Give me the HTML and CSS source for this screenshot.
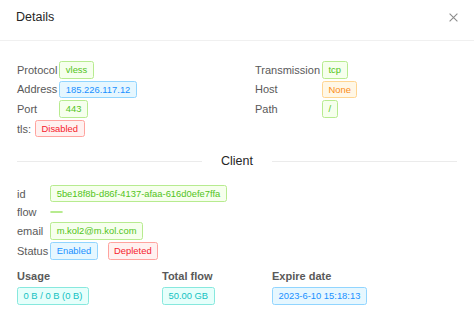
FILE: index.html
```html
<!DOCTYPE html>
<html>
<head>
<meta charset="utf-8">
<link rel="stylesheet" href="styles.css">
</head>
<body>
<div class="modal">
  <div class="header">
    <div class="title">Details</div>
    <button class="close" aria-label="Close">
      <svg width="9" height="9" viewBox="0 0 9 9"><path d="M0.6 0.6 L8.4 8.4 M8.4 0.6 L0.6 8.4" stroke="#8c8c8c" stroke-width="1.1" fill="none"/></svg>
    </button>
  </div>
  <div class="body">
    <div class="info">
      <div class="kv">
        <span class="label">Protocol</span><span class="tag green">vless</span>
        <span class="label">Address</span><span class="tag blue">185.226.117.12</span>
        <span class="label">Port</span><span class="tag green">443</span>
      </div>
      <div class="kv">
        <span class="label">Transmission</span><span class="tag green">tcp</span>
        <span class="label">Host</span><span class="tag orange">None</span>
        <span class="label">Path</span><span class="tag green">/</span>
      </div>
    </div>
    <div class="tls"><span class="label">tls:</span> <span class="tag red">Disabled</span></div>
    <div class="divider"><span class="divider-text">Client</span></div>
    <div class="kv client">
      <span class="label">id</span><span class="tag green">5be18f8b-d86f-4137-afaa-616d0efe7ffa</span>
      <span class="label">flow</span><span class="tag green empty"></span>
      <span class="label">email</span><span class="tag green">m.kol2@m.kol.com</span>
      <span class="label">Status</span><span class="tags"><span class="tag blue">Enabled</span><span class="tag red">Depleted</span></span>
    </div>
    <div class="stats">
      <div class="stat"><span class="stat-label">Usage</span><span class="tag cyan">0 B / 0 B (0 B)</span></div>
      <div class="stat"><span class="stat-label">Total flow</span><span class="tag cyan">50.00 GB</span></div>
      <div class="stat"><span class="stat-label">Expire date</span><span class="tag blue">2023-6-10 15:18:13</span></div>
    </div>
  </div>
</div>
</body>
</html>
```
FILE: styles.css
```css
* { box-sizing: border-box; }
html, body { margin: 0; padding: 0; background: #fff; }
body { font-family: "Liberation Sans", Arial, sans-serif; color: #595959; }
.modal { width: 474px; height: 310px; background: #fff; overflow: hidden; }
.header {
  height: 41px;
  padding: 9px 16px 0 16px;
  border-bottom: 1px solid #f0f0f0;
  display: flex;
  justify-content: space-between;
  align-items: flex-start;
}
.title { font-size: 12.5px; line-height: 17.2px; color: #262626; }
.close {
  border: 0; background: none; padding: 0; margin: 4px 0 0 0;
  width: 9px; height: 9px; display: flex; cursor: pointer;
}
.body { padding: 20px 17px 0 17px; }
.info { display: grid; grid-template-columns: 238px 1fr; }
.kv {
  display: grid;
  grid-template-columns: auto 1fr;
  column-gap: 2px;
  row-gap: 2px;
  align-items: center;
  justify-items: start;
}
.label { font-size: 11px; line-height: 16px; color: #595959; }
.tag {
  display: inline-block;
  font-size: 9.4px;
  line-height: 15.6px;
  padding: 0 5.5px;
  border: 1px solid;
  border-radius: 2.5px;
  white-space: nowrap;
}
.tag.empty { height: 2px; width: 12.5px; padding: 0; line-height: 0; }
.green { color: #52c41a; background: #f6ffed; border-color: #b7eb8f; }
.blue { color: #1890ff; background: #e6f7ff; border-color: #91d5ff; }
.red { color: #f5222d; background: #fff1f0; border-color: #ffa39e; }
.orange { color: #fa8c16; background: #fff7e6; border-color: #ffd591; }
.cyan { color: #13c2c2; background: #e6fffb; border-color: #87e8de; }
.tls { margin-top: 2px; display: flex; align-items: center; gap: 4px; }
.divider {
  display: flex;
  align-items: center;
  margin: 16px 0 14.5px 0;
}
.divider::before, .divider::after {
  content: "";
  flex: 1;
  border-top: 1px solid #ebebeb;
}
.divider-text { padding: 0 19px; font-size: 12.5px; line-height: 17px; color: #262626; }
.tags { display: flex; gap: 10px; }
.stats {
  margin-top: 8.6px;
  display: grid;
  grid-template-columns: 145px 110px auto;
}
.stat { display: flex; flex-direction: column; align-items: flex-start; gap: 2px; }
.stat-label { font-size: 11px; line-height: 17px; font-weight: bold; color: #595959; }
```
